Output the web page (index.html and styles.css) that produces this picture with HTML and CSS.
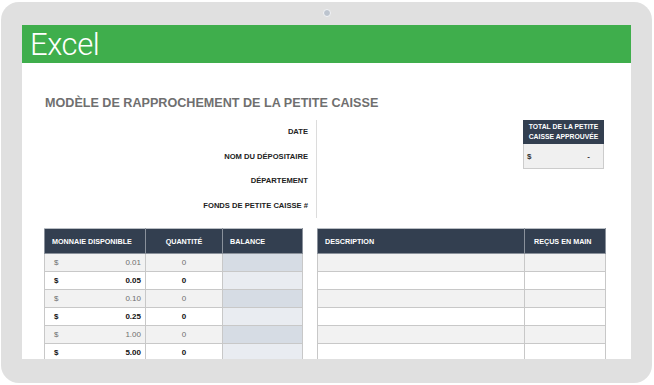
FILE: index.html
```html
<!DOCTYPE html>
<html lang="fr">
<head>
<meta charset="utf-8">
<title>Excel - Petite caisse</title>
<link rel="stylesheet" href="styles.css">
</head>
<body>
<div class="frame">
  <div class="camera"></div>
  <div class="screen">
    <div class="appbar"><div class="appname">Excel</div></div>
    <div class="content">
      <h1 class="title">MODÈLE DE RAPPROCHEMENT DE LA PETITE CAISSE</h1>
      <div class="info">
        <div class="labels">
          <div class="label">DATE</div>
          <div class="label">NOM DU DÉPOSITAIRE</div>
          <div class="label">DÉPARTEMENT</div>
          <div class="label">FONDS DE PETITE CAISSE #</div>
        </div>
        <div class="values"></div>
        <div class="total">
          <div class="total-head">TOTAL DE LA PETITE<br>CAISSE APPROUVÉE</div>
          <div class="total-body"><span>$</span><span>-</span></div>
        </div>
      </div>
      <div class="tables">
        <table class="grid cash">
          <colgroup><col class="c1"><col class="c2"><col class="c3"></colgroup>
          <thead>
            <tr><th class="left">MONNAIE DISPONIBLE</th><th>QUANTITÉ</th><th class="left">BALANCE</th></tr>
          </thead>
          <tbody>
            <tr class="odd"><td class="money"><span>$</span><span>0.01</span></td><td class="qty">0</td><td class="bal"></td></tr>
            <tr class="even"><td class="money"><span>$</span><span>0.05</span></td><td class="qty">0</td><td class="bal"></td></tr>
            <tr class="odd"><td class="money"><span>$</span><span>0.10</span></td><td class="qty">0</td><td class="bal"></td></tr>
            <tr class="even"><td class="money"><span>$</span><span>0.25</span></td><td class="qty">0</td><td class="bal"></td></tr>
            <tr class="odd"><td class="money"><span>$</span><span>1.00</span></td><td class="qty">0</td><td class="bal"></td></tr>
            <tr class="even"><td class="money"><span>$</span><span>5.00</span></td><td class="qty">0</td><td class="bal"></td></tr>
          </tbody>
        </table>
        <table class="grid desc">
          <colgroup><col class="d1"><col class="d2"></colgroup>
          <thead>
            <tr><th class="left">DESCRIPTION</th><th class="left recus">REÇUS EN MAIN</th></tr>
          </thead>
          <tbody>
            <tr class="odd"><td></td><td></td></tr>
            <tr class="even"><td></td><td></td></tr>
            <tr class="odd"><td></td><td></td></tr>
            <tr class="even"><td></td><td></td></tr>
            <tr class="odd"><td></td><td></td></tr>
            <tr class="even"><td></td><td></td></tr>
          </tbody>
        </table>
      </div>
    </div>
  </div>
</div>
</body>
</html>
```

FILE: styles.css
```css
html, body {
  margin: 0;
  padding: 0;
  background: #ffffff;
}
body {
  font-family: "Liberation Sans", Arial, sans-serif;
}
.frame {
  box-sizing: border-box;
  margin: 2px 0 0 1px;
  width: 651px;
  height: 381px;
  background: #e0e0e0;
  border-radius: 18px;
  padding: 7px 21px 0 21px;
  display: flex;
  flex-direction: column;
  align-items: center;
}
.camera {
  box-sizing: border-box;
  width: 8px;
  height: 8px;
  border-radius: 50%;
  background: #bcc4ce;
  border: 1.5px solid #f3f4f6;
  margin-bottom: 8px;
}
.screen {
  width: 609px;
  height: 334px;
  background: #ffffff;
  overflow: hidden;
}
.appbar {
  height: 38px;
  background: #3fae4c;
  display: flex;
  align-items: center;
  padding-left: 8px;
}
.appname {
  font-family: Roboto, "Open Sans", sans-serif;
  font-weight: 300;
  font-size: 31px;
  color: #ffffff;
  letter-spacing: -0.4px;
  line-height: 36px;
  height: 36px;
  margin-top: 1px;
}
.content {
  padding: 33px 0 0 22px;
}
.title {
  margin: 0 0 9px 1px;
  font-size: 12.6px;
  line-height: 15px;
  font-weight: bold;
  color: #6f6f6f;
}
.info {
  display: flex;
  height: 98px;
}
.labels {
  width: 264px;
  display: flex;
  flex-direction: column;
}
.label {
  height: 24.5px;
  line-height: 24.5px;
  text-align: right;
  font-size: 7.6px;
  font-weight: bold;
  color: #222222;
}
.values {
  margin-left: 8px;
  width: 206px;
  border-left: 1px solid #dcdcdc;
}
.total {
  width: 81px;
}
.total-head {
  height: 24px;
  box-sizing: border-box;
  background: #333f50;
  color: #ffffff;
  font-size: 6.8px;
  font-weight: bold;
  line-height: 10.5px;
  text-align: center;
  padding-top: 1.5px;
}
.total-body {
  box-sizing: border-box;
  height: 25px;
  background: #f0f0f0;
  border: 1px solid #cccccc;
  border-top: none;
  display: flex;
  justify-content: space-between;
  align-items: center;
  padding: 0 13px 0 3px;
  font-size: 8px;
  font-weight: bold;
  color: #333333;
}
.tables {
  display: flex;
  gap: 14px;
  margin-top: 10px;
}
.grid {
  border-collapse: collapse;
  table-layout: fixed;
}
.cash { width: 258px; }
.desc { width: 288px; }
.c1 { width: 101px; }
.c2 { width: 77px; }
.c3 { width: 80px; }
.d1 { width: 207px; }
.d2 { width: 81px; }
.grid th {
  height: 24px;
  padding: 0;
  background: #333f50;
  color: #ffffff;
  font-size: 7.2px;
  font-weight: bold;
  text-align: center;
  border: 1px solid #8a919b;
  border-top-color: #b9bec4;
}
.grid th.left {
  text-align: left;
  padding-left: 7px;
}
.grid th.recus {
  padding-left: 9px;
}
.grid td {
  height: 17px;
  padding: 0;
  border: 1px solid #c8c8c8;
  font-size: 8px;
}
.grid tr.odd td {
  background: #f2f2f2;
  color: #6e6e6e;
}
.grid tr.even td {
  background: #ffffff;
  color: #111111;
  font-weight: bold;
}
.grid tr.odd td.bal {
  background: #d6dce4;
}
.grid tr.even td.bal {
  background: #e9ecf1;
}
.money {
  line-height: 17px;
}
.money span {
  display: inline-block;
}
.money span:first-child {
  padding-left: 9px;
}
.money span:last-child {
  float: right;
  padding-right: 4px;
}
.qty {
  text-align: center;
}
```
